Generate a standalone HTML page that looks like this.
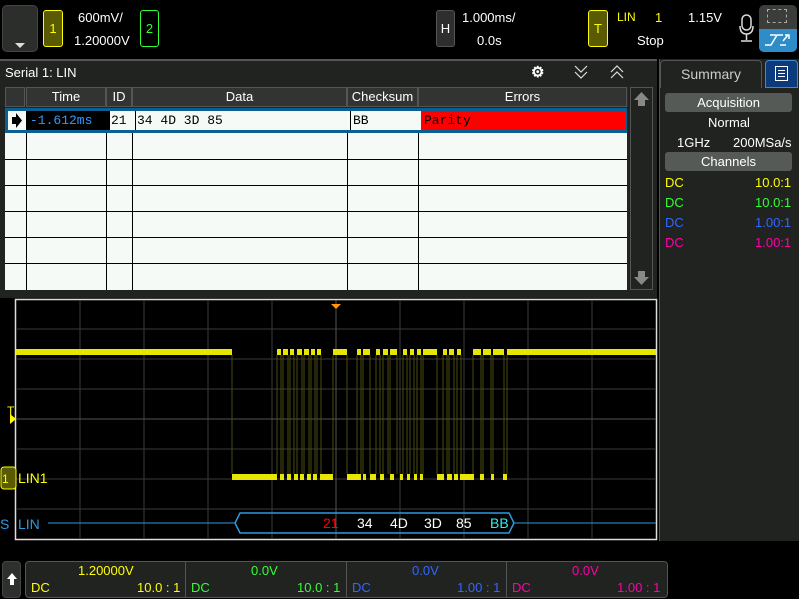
<!DOCTYPE html>
<html><head><meta charset="utf-8"><style>
*{margin:0;padding:0;box-sizing:border-box}
body{width:799px;height:599px;background:#000;position:relative;overflow:hidden;font-family:"Liberation Sans",sans-serif;color:#fff;font-size:13px}
.a{position:absolute}
.mono{font-family:"Liberation Mono",monospace}
</style></head><body>
<!-- top bar -->
<div class="a" style="left:2px;top:5px;width:36px;height:47px;background:#2c2e2c;border:1px solid #444;border-radius:5px"></div>
<div class="a" style="left:15px;top:43px;width:0;height:0;border-left:5px solid transparent;border-right:5px solid transparent;border-top:5px solid #ddd"></div>
<div class="a" style="left:43px;top:10px;width:20px;height:37px;background:#5a5a00;border:1px solid #ff0;border-radius:3px;color:#ff0;text-align:center;line-height:36px">1</div>
<div class="a" style="left:78px;top:10px">600mV/</div>
<div class="a" style="left:74px;top:33px">1.20000V</div>
<div class="a" style="left:140px;top:10px;width:19px;height:37px;border:1px solid #3f3;border-radius:3px;color:#3f3;text-align:center;line-height:36px">2</div>
<div class="a" style="left:436px;top:10px;width:19px;height:37px;background:#2e2e2e;border:1px solid #555;border-radius:3px;text-align:center;line-height:36px">H</div>
<div class="a" style="left:462px;top:10px">1.000ms/</div>
<div class="a" style="left:477px;top:33px">0.0s</div>
<div class="a" style="left:588px;top:10px;width:20px;height:37px;background:#5a5a00;border:1px solid #ff0;border-radius:3px;color:#ff0;text-align:center;line-height:36px">T</div>
<div class="a" style="left:617px;top:10px;color:#ff0;font-size:12px">LIN</div>
<div class="a" style="left:655px;top:10px;color:#ff0">1</div>
<div class="a" style="left:688px;top:10px">1.15V</div>
<div class="a" style="left:637px;top:33px">Stop</div>
<svg class="a" style="left:737px;top:14px" width="20" height="30"><rect x="5" y="1" width="9" height="15" rx="4.5" fill="none" stroke="#ddd" stroke-width="1.5"/><path d="M3 12 Q3 20 9.5 20 Q16 20 16 12 M9.5 20 V26 M4 27 H15" fill="none" stroke="#ddd" stroke-width="1.5"/></svg>
<div class="a" style="left:759px;top:5px;width:38px;height:47px;border-radius:5px;overflow:hidden;background:#3a3d3a">
<div class="a" style="left:0;top:24px;width:38px;height:23px;background:#2e8dc8"></div>
<div class="a" style="left:8px;top:4px;width:20px;height:14px;border:1px dashed #aaa"></div>
<svg class="a" style="left:4px;top:26px" width="30" height="18"><path d="M2 14 L8 14 L14 4 L20 4 M7 4 H13 M17 14 H23 M20 10 L25 4 M22 4 H26 V8" fill="none" stroke="#fff" stroke-width="1.5"/></svg>
</div>
<!-- serial panel -->
<div class="a" style="left:0;top:59px;width:657px;height:239px;background:#202320;border-top:2px solid #555"></div>
<div class="a" style="left:5px;top:65px">Serial 1: LIN</div>
<div class="a" style="left:531px;top:63px;font-size:15px;font-weight:bold">⚙</div>
<svg class="a" style="left:573px;top:64px" width="16" height="18"><path d="M2 2 L8 8 L14 2 M2 8 L8 14 L14 8" fill="none" stroke="#ddd" stroke-width="1.2"/></svg>
<svg class="a" style="left:609px;top:64px" width="16" height="18"><path d="M2 8 L8 2 L14 8 M2 14 L8 8 L14 14" fill="none" stroke="#ddd" stroke-width="1.2"/></svg>
<!-- table -->
<div class="a" style="left:5px;top:87px;width:623px;height:20px;background:#2a2c2a">
<div class="a" style="left:0;top:0;width:20px;height:20px;background:#333;border:1px solid #555"></div>
<div class="a" style="left:21px;top:0;width:80px;height:20px;background:#333;border:1px solid #555;text-align:center;line-height:18px">Time</div>
<div class="a" style="left:101px;top:0;width:26px;height:20px;background:#333;border:1px solid #555;text-align:center;line-height:18px">ID</div>
<div class="a" style="left:127px;top:0;width:215px;height:20px;background:#333;border:1px solid #555;text-align:center;line-height:18px">Data</div>
<div class="a" style="left:342px;top:0;width:71px;height:20px;background:#333;border:1px solid #555;text-align:center;line-height:18px">Checksum</div>
<div class="a" style="left:413px;top:0;width:209px;height:20px;background:#333;border:1px solid #555;text-align:center;line-height:18px">Errors</div>
</div>
<div class="a" style="left:5px;top:108px;width:622px;height:182px;background:#f5faf6">
<div class="a" style="left:21px;top:0;width:1px;height:182px;background:#000"></div>
<div class="a" style="left:101px;top:0;width:1px;height:182px;background:#000"></div>
<div class="a" style="left:127px;top:0;width:1px;height:182px;background:#000"></div>
<div class="a" style="left:342px;top:0;width:1px;height:182px;background:#000"></div>
<div class="a" style="left:413px;top:0;width:1px;height:182px;background:#000"></div>
<div class="a" style="left:0;top:51px;width:622px;height:1px;background:#000"></div>
<div class="a" style="left:0;top:77px;width:622px;height:1px;background:#000"></div>
<div class="a" style="left:0;top:103px;width:622px;height:1px;background:#000"></div>
<div class="a" style="left:0;top:129px;width:622px;height:1px;background:#000"></div>
<div class="a" style="left:0;top:155px;width:622px;height:1px;background:#000"></div>
</div>
<div class="a mono" style="left:5px;top:108px;width:622px;height:25px;border:3px solid #0a5f95;background:#f5faf6;font-size:13px;color:#000">
<svg class="a" style="left:3px;top:2px" width="12" height="15"><path d="M1 4 H5 V0 L11 7.5 L5 15 V11 H1Z" fill="#000"/></svg>
<div class="a" style="left:18px;top:0;width:83px;height:19px;background:#000;color:#39f;padding-left:4px;line-height:19px">-1.612ms</div>
<div class="a" style="left:101px;top:0;width:1px;height:19px;background:#000"></div>
<div class="a" style="left:103px;top:0;line-height:19px">21</div>
<div class="a" style="left:127px;top:0;width:1px;height:19px;background:#000"></div>
<div class="a" style="left:129px;top:0;line-height:19px">34 4D 3D 85</div>
<div class="a" style="left:342px;top:0;width:1px;height:19px;background:#000"></div>
<div class="a" style="left:345px;top:0;line-height:19px">BB</div>
<div class="a" style="left:413px;top:0;width:204px;height:19px;background:#f00;padding-left:3px;line-height:19px">Parity</div>
</div>
<div class="a" style="left:630px;top:87px;width:23px;height:203px;background:#202320;border:1px solid #555"></div>
<svg class="a" style="left:632px;top:90px" width="19" height="18"><path d="M9.5 2 L17 10 H13 V16 H6 V10 H2Z" fill="#888"/></svg>
<svg class="a" style="left:632px;top:269px" width="19" height="18"><path d="M9.5 16 L17 8 H13 V2 H6 V8 H2Z" fill="#888"/></svg>
<!-- waveform -->
<svg class="a" style="left:0;top:297px" width="660" height="245">
<rect x="15.5" y="2.5" width="641" height="240" fill="#000" stroke="#ddd" stroke-width="1.5"/>
<g stroke="#3a3a3a" stroke-width="1">
<path d="M80 3V242M144 3V242M208 3V242M272 3V242M400 3V242M464 3V242M528 3V242M592 3V242M16 32H656M16 62H656M16 92H656M16 152H656M16 182H656M16 212H656"/>
<path d="M336 3V242M16 122H656" stroke="#555"/>
</g>
<path stroke="#4a4a10" stroke-width="1" d="M232 58V177M277 58V177M281 58V177M283 58V177M288 58V177M290 58V177M294 58V177M297 58V177M302 58V177M304 58V177M309 58V177M311 58V177M315 58V177M317 58V177M321 58V177M333 58V177M347 58V177M357 58V177M361 58V177M363 58V177M370 58V177M376 58V177M380 58V177M383 58V177M388 58V177M390 58V177M397 58V177M403 58V177M407 58V177M410 58V177M414 58V177M417 58V177M421 58V177M423 58V177M437 58V177M443 58V177M447 58V177M449 58V177M454 58V177M457 58V177M461 58V177M473 58V177M481 58V177M483 58V177M491 58V177M493 58V177M504 58V177M507 58V177"/>
<g fill="#e6e600">
<rect x="16" y="52" width="216" height="6"/>
<rect x="277" y="52" width="4" height="6"/><rect x="283" y="52" width="5" height="6"/><rect x="290" y="52" width="4" height="6"/><rect x="297" y="52" width="5" height="6"/><rect x="304" y="52" width="5" height="6"/><rect x="311" y="52" width="4" height="6"/><rect x="317" y="52" width="4" height="6"/>
<rect x="333" y="52" width="14" height="6"/><rect x="357" y="52" width="4" height="6"/><rect x="363" y="52" width="7" height="6"/><rect x="376" y="52" width="4" height="6"/><rect x="383" y="52" width="5" height="6"/><rect x="390" y="52" width="7" height="6"/>
<rect x="403" y="52" width="4" height="6"/><rect x="410" y="52" width="4" height="6"/><rect x="417" y="52" width="4" height="6"/><rect x="423" y="52" width="14" height="6"/><rect x="443" y="52" width="4" height="6"/><rect x="449" y="52" width="5" height="6"/><rect x="457" y="52" width="4" height="6"/><rect x="473" y="52" width="8" height="6"/><rect x="483" y="52" width="8" height="6"/><rect x="493" y="52" width="11" height="6"/><rect x="507" y="52" width="149" height="6"/>
<rect x="232" y="177" width="45" height="6"/><rect x="280" y="177" width="4" height="6"/><rect x="287" y="177" width="4" height="6"/><rect x="294" y="177" width="4" height="6"/><rect x="300" y="177" width="4" height="6"/><rect x="307" y="177" width="4" height="6"/><rect x="313" y="177" width="4" height="6"/><rect x="320" y="177" width="13" height="6"/>
<rect x="347" y="177" width="14" height="6"/><rect x="363" y="177" width="3" height="6"/><rect x="370" y="177" width="6" height="6"/><rect x="380" y="177" width="4" height="6"/><rect x="390" y="177" width="4" height="6"/><rect x="400" y="177" width="3" height="6"/><rect x="407" y="177" width="3" height="6"/><rect x="414" y="177" width="3" height="6"/><rect x="420" y="177" width="3" height="6"/><rect x="437" y="177" width="7" height="6"/><rect x="447" y="177" width="5" height="6"/><rect x="454" y="177" width="4" height="6"/><rect x="460" y="177" width="14" height="6"/><rect x="480" y="177" width="4" height="6"/><rect x="491" y="177" width="3" height="6"/><rect x="503" y="177" width="4" height="6"/>
</g>
<path d="M331 7 L341 7 L336 12Z" fill="#f90"/>
<path d="M10 117 L16 122 L10 127Z" fill="#ff0"/>
<text x="7" y="118" fill="#ff0" font-size="12" font-family="Liberation Sans">T</text>
<rect x="1" y="170" width="15" height="22" rx="3" fill="#5a5a00" stroke="#ff0"/>
<text x="2" y="186" fill="#ff0" font-size="12" font-family="Liberation Sans">1</text>
<text x="18" y="186" fill="#ff0" font-size="14" font-family="Liberation Sans">LIN1</text>
<text x="0" y="232" fill="#2d9ae0" font-size="14" font-family="Liberation Sans">S</text>
<text x="18" y="232" fill="#2d9ae0" font-size="14" font-family="Liberation Sans">LIN</text>
<path d="M48 226 H235 M513 226 H656" stroke="#2d9ae0"/>
<path d="M240 216 H509 L514 226 L509 236 H240 L235 226Z" fill="none" stroke="#2d9ae0" stroke-width="1.5"/>
<g font-size="14" font-family="Liberation Sans" fill="#fff">
<text x="323" y="231" fill="#f00">21</text><text x="357" y="231">34</text><text x="390" y="231">4D</text><text x="424" y="231">3D</text><text x="456" y="231">85</text><text x="490" y="231" fill="#3ee">BB</text>
</g>
</svg>
<!-- right panel -->
<div class="a" style="left:659px;top:59px;width:140px;height:482px;background:#202320;border-left:1px solid #555"></div>
<div class="a" style="left:660px;top:60px;width:102px;height:28px;border:1px solid #555;border-bottom:none;border-radius:4px 4px 0 0;text-align:center;line-height:26px;color:#ccc;font-size:14px">Summary</div>
<div class="a" style="left:765px;top:60px;width:33px;height:28px;background:#0b3b7d;border:1px solid #48c;border-radius:4px 4px 0 0"></div>
<div class="a" style="left:775px;top:66px;width:13px;height:15px;border:1.5px solid #fff"><div style="margin:3px 2px;height:1px;background:#fff;box-shadow:0 3px #fff,0 6px #fff"></div></div>
<div class="a" style="left:665px;top:93px;width:127px;height:19px;background:#555a56;border-radius:3px;text-align:center;line-height:19px;font-size:13px">Acquisition</div>
<div class="a" style="left:660px;top:115px;width:138px;text-align:center">Normal</div>
<div class="a" style="left:677px;top:135px">1GHz</div>
<div class="a" style="left:733px;top:135px">200MSa/s</div>
<div class="a" style="left:665px;top:152px;width:127px;height:19px;background:#555a56;border-radius:3px;text-align:center;line-height:19px">Channels</div>
<div class="a" style="left:665px;top:175px;color:#ff0">DC</div><div class="a" style="left:755px;top:175px;color:#ff0">10.0:1</div>
<div class="a" style="left:665px;top:195px;color:#3f3">DC</div><div class="a" style="left:755px;top:195px;color:#3f3">10.0:1</div>
<div class="a" style="left:665px;top:215px;color:#36f">DC</div><div class="a" style="left:755px;top:215px;color:#36f">1.00:1</div>
<div class="a" style="left:665px;top:235px;color:#f0a">DC</div><div class="a" style="left:755px;top:235px;color:#f0a">1.00:1</div>
<!-- bottom -->
<div class="a" style="left:2px;top:561px;width:19px;height:37px;background:#2e302e;border:1px solid #444;border-radius:4px"></div>
<svg class="a" style="left:5px;top:571px" width="14" height="16"><path d="M7 2 L12 8 H9 V14 H5 V8 H2Z" fill="#fff"/></svg>
<div class="a" style="left:25px;top:561px;width:643px;height:37px;background:#202320;border:1px solid #555;border-radius:4px"></div>
<div class="a" style="left:185px;top:562px;width:1px;height:36px;background:#555"></div>
<div class="a" style="left:346px;top:562px;width:1px;height:36px;background:#555"></div>
<div class="a" style="left:506px;top:562px;width:1px;height:36px;background:#555"></div>
<div style="font-size:13px">
<div class="a" style="left:78px;top:563px;color:#ff0">1.20000V</div><div class="a" style="left:31px;top:580px;color:#ff0">DC</div><div class="a" style="left:137px;top:580px;color:#ff0">10.0 : 1</div>
<div class="a" style="left:251px;top:563px;color:#3f3">0.0V</div><div class="a" style="left:191px;top:580px;color:#3f3">DC</div><div class="a" style="left:297px;top:580px;color:#3f3">10.0 : 1</div>
<div class="a" style="left:412px;top:563px;color:#36f">0.0V</div><div class="a" style="left:352px;top:580px;color:#36f">DC</div><div class="a" style="left:457px;top:580px;color:#36f">1.00 : 1</div>
<div class="a" style="left:572px;top:563px;color:#f0a">0.0V</div><div class="a" style="left:512px;top:580px;color:#f0a">DC</div><div class="a" style="left:617px;top:580px;color:#f0a">1.00 : 1</div>
</div>
</body></html>
